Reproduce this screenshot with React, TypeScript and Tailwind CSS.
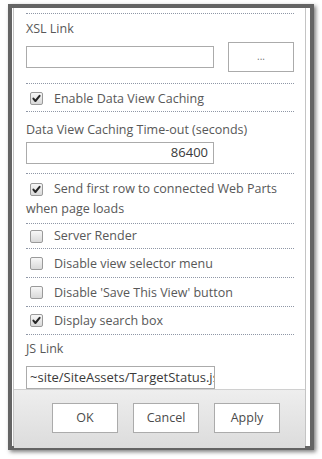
import React from "react";

const font = { fontFamily: '"Open Sans", "Noto Sans", sans-serif' };

function Check({ checked }: { checked: boolean }) {
  return (
    <span className="relative inline-block w-[13px] h-[13px] shrink-0 rounded-[2px] border border-[#9a9a9a] bg-gradient-to-b from-[#f7f7f7] to-[#d9d9d9]">
      {checked && (
        <svg viewBox="0 0 13 13" className="absolute left-[-1px] top-[-1px] w-[13px] h-[13px]">
          <path d="M3.4 6.6 L5.4 9 L9.6 3.8" fill="none" stroke="#262626" strokeWidth="2" strokeLinecap="round" strokeLinejoin="round" />
        </svg>
      )}
    </span>
  );
}

function CheckRow({ label, checked, h, extra }: { label: string; checked: boolean; h: string; extra?: string }) {
  return (
    <div className={`flex items-center border-b border-dotted border-[#8f97a6] ${h}`}>
      <div className={`flex items-center pl-[4px] ${extra ?? ""}`}>
        <Check checked={checked} />
        <span className="ml-[11px] leading-[18px]">{label}</span>
      </div>
    </div>
  );
}

export default function App() {
  return (
    <div className="w-[322px] h-[459px] bg-white overflow-hidden text-[12.5px] text-[#585858]" style={font}>
      <div className="ml-[8px] mt-[4px] w-[306px] h-[446px] border-4 border-[#646464] shadow-[2px_2px_4px_rgba(0,0,0,0.5)] bg-white flex">
        <div className="ml-[1px] w-[293px] h-full border-x border-[#c4c4c4] flex flex-col">
          <div className="flex-1 pl-[12px] pr-[11px] pt-[5px]">
            <div className="border-t border-dotted border-[#8f97a6]" />
            {/* XSL Link */}
            <div className="h-[70px] border-b border-dotted border-[#8f97a6] pt-[6px]">
              <div className="leading-[18px]">XSL Link</div>
              <div className="mt-[4px] flex items-center h-[30px]">
                <div className="w-[188px] h-[22px] border border-[#ababab] bg-white" />
                <div className="ml-[14px] w-[66px] h-[30px] border border-[#ababab] bg-white flex items-center justify-center text-[10px] text-[#777] leading-none pb-[2px]">
                  ...
                </div>
              </div>
            </div>
            <CheckRow label="Enable Data View Caching" checked h="h-[28px]" extra="pt-[2px]" />
            {/* Time-out */}
            <div className="h-[62px] border-b border-dotted border-[#8f97a6] pt-[9px]">
              <div className="leading-[18px]">Data View Caching Time-out (seconds)</div>
              <div className="mt-[3px] w-[188px] h-[22px] border border-[#ababab] bg-white flex items-center justify-end pr-[5px] text-[13px] text-[#3a3a3a]">
                86400
              </div>
            </div>
            {/* Send first row */}
            <div className="h-[50px] border-b border-dotted border-[#8f97a6] pt-[5px]">
              <div className="flex items-center h-[20px] pl-[4px]">
                <Check checked />
                <span className="ml-[11px] leading-[20px] whitespace-nowrap">Send first row to connected Web Parts</span>
              </div>
              <div className="leading-[20px]">when page loads</div>
            </div>
            <CheckRow label="Server Render" checked={false} h="h-[25px]" />
            <CheckRow label="Disable view selector menu" checked={false} h="h-[29px]" extra="pt-[1px]" />
            <CheckRow label="Disable 'Save This View' button" checked={false} h="h-[29px]" extra="pt-[1px]" />
            <CheckRow label="Display search box" checked h="h-[28px]" />
            {/* JS Link */}
            <div className="pt-[5px]">
              <div className="leading-[18px]">JS Link</div>
              <div className="mt-[8px] w-[189px] h-[23px] border border-[#ababab] bg-white overflow-hidden whitespace-nowrap flex items-center pl-[3px] text-[13px] text-[#3a3a3a]">
                ~site/SiteAssets/TargetStatus.js
              </div>
            </div>
          </div>
          <div className="h-[59px] shrink-0 border-t border-[#d0d0d0] bg-gradient-to-b from-[#eeeeee] to-[#dcdcdc] flex items-center pl-[38px] gap-[15px] pb-[2px]">
            <div className="w-[66px] h-[30px] border border-[#ababab] bg-white flex items-center justify-center text-[#4a4a4a]">OK</div>
            <div className="w-[66px] h-[30px] border border-[#ababab] bg-white flex items-center justify-center text-[#4a4a4a]">Cancel</div>
            <div className="w-[66px] h-[30px] border border-[#ababab] bg-white flex items-center justify-center text-[#4a4a4a]">Apply</div>
          </div>
        </div>
      </div>
    </div>
  );
}
